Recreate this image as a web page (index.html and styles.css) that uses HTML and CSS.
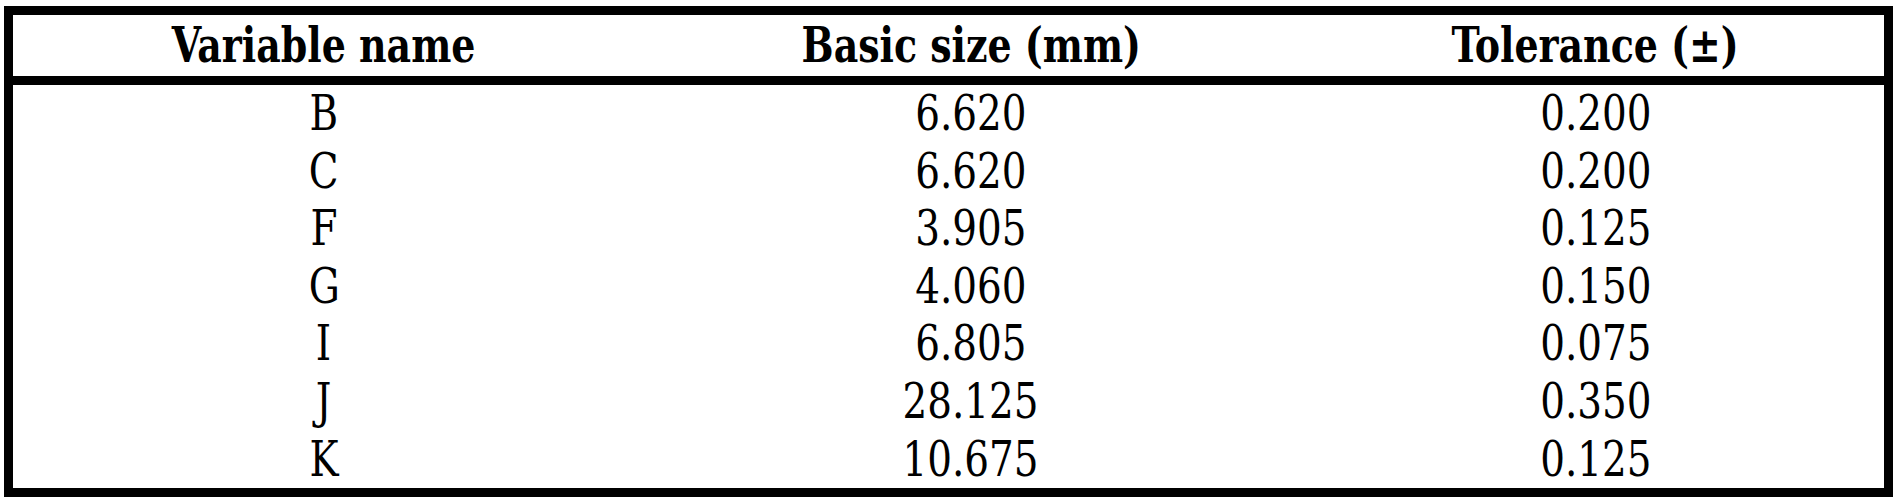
FILE: index.html
```html
<!DOCTYPE html>
<html>
<head>
<meta charset="utf-8">
<link rel="stylesheet" href="styles.css">
</head>
<body>
<table class="spec">
  <colgroup>
    <col class="c1">
    <col class="c2">
    <col class="c3">
  </colgroup>
  <thead>
    <tr><th><span class="t">Variable name</span></th><th><span class="t">Basic size (mm)</span></th><th><span class="t">Tolerance (±)</span></th></tr>
  </thead>
  <tbody>
    <tr><td><span class="t">B</span></td><td><span class="t">6.620</span></td><td><span class="t">0.200</span></td></tr>
    <tr><td><span class="t">C</span></td><td><span class="t">6.620</span></td><td><span class="t">0.200</span></td></tr>
    <tr><td><span class="t">F</span></td><td><span class="t">3.905</span></td><td><span class="t">0.125</span></td></tr>
    <tr><td><span class="t">G</span></td><td><span class="t">4.060</span></td><td><span class="t">0.150</span></td></tr>
    <tr><td><span class="t">I</span></td><td><span class="t">6.805</span></td><td><span class="t">0.075</span></td></tr>
    <tr><td><span class="t">J</span></td><td><span class="t">28.125</span></td><td><span class="t">0.350</span></td></tr>
    <tr><td><span class="t">K</span></td><td><span class="t">10.675</span></td><td><span class="t">0.125</span></td></tr>
  </tbody>
</table>
</body>
</html>
```
FILE: styles.css
```css
html, body {
  margin: 0;
  padding: 0;
  background: #ffffff;
}
body {
  padding: 6px 0 0 4px;
  font-family: "DejaVu Serif Condensed", "DejaVu Serif", serif;
  font-stretch: condensed;
  color: #000;
}
.spec {
  width: 1889px;
  border: 9px solid #000;
  border-collapse: separate;
  border-spacing: 0;
  table-layout: fixed;
}
.c1 { width: 33.24%; }
.c2 { width: 35.92%; }
.c3 { width: 30.84%; }
.t {
  display: inline-block;
  transform: scaleX(0.9);
  transform-origin: center;
}
.spec th .t {
  transform: scaleX(0.86);
}
.spec th {
  padding: 0;
  height: 61px;
  font-size: 49px;
  font-weight: bold;
  line-height: 61px;
  text-align: center;
  border-bottom: 9px solid #000;
}
.spec td {
  padding: 0;
  font-size: 48px;
  font-weight: normal;
  line-height: 57.6px;
  text-align: center;
}
```
